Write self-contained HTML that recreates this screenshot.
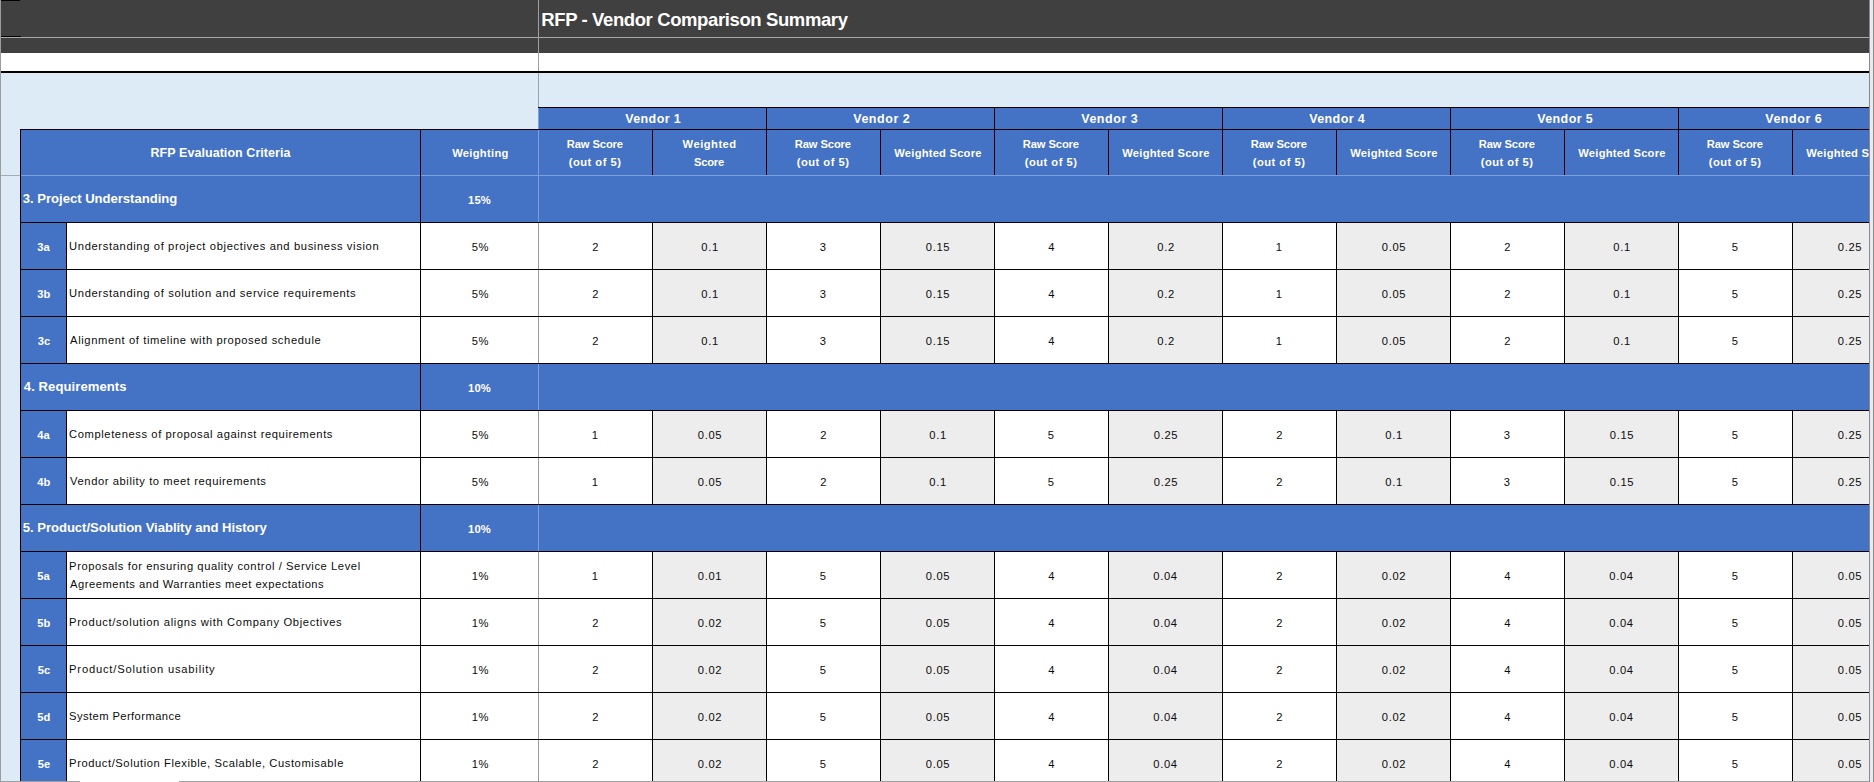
<!DOCTYPE html><html><head><meta charset="utf-8"><style>
html,body{margin:0;padding:0;width:1874px;height:782px;overflow:hidden;position:relative;background:#fff}
.r,.t{position:absolute}
.t{white-space:nowrap;line-height:1;font-family:"Liberation Sans",sans-serif}
.title{font-size:18.5px;font-weight:bold;color:#ffffff;letter-spacing:-0.3900px}
.hdr10{font-size:12.5px;font-weight:bold;color:#ffffff;letter-spacing:0.0591px}
.b9{font-size:11.2px;font-weight:bold;color:#ffffff;letter-spacing:0.2154px}
.sec{font-size:13.1px;font-weight:bold;color:#ffffff;letter-spacing:-0.0217px}
.body{font-size:11.2px;font-weight:normal;color:#0c0c0c;letter-spacing:0.6296px}
</style></head><body><div class="r" style="left:0px;top:0px;width:1874px;height:782px;background:#ffffff"></div><div class="r" style="left:0px;top:0px;width:1869px;height:53px;background:#404040"></div><div class="r" style="left:0px;top:37px;width:1869px;height:1px;background:#a8a8a8"></div><div class="r" style="left:1px;top:0px;width:19px;height:1px;background:#000"></div><div class="r" style="left:1px;top:36px;width:20px;height:1px;background:#000"></div><div class="r" style="left:0px;top:53px;width:1869px;height:18px;background:#ffffff"></div><div class="r" style="left:0px;top:71px;width:1869px;height:2px;background:#000"></div><div class="r" style="left:0px;top:73px;width:1869px;height:709px;background:#ddebf7"></div><div class="r" style="left:20px;top:129px;width:1849px;height:653px;background:#4472c4"></div><div class="r" style="left:538px;top:107px;width:1331px;height:22px;background:#4472c4"></div><div class="r" style="left:66px;top:222px;width:1803px;height:47px;background:#ffffff"></div><div class="r" style="left:652px;top:222px;width:114px;height:47px;background:#ededed"></div><div class="r" style="left:880px;top:222px;width:114px;height:47px;background:#ededed"></div><div class="r" style="left:1108px;top:222px;width:114px;height:47px;background:#ededed"></div><div class="r" style="left:1336px;top:222px;width:114px;height:47px;background:#ededed"></div><div class="r" style="left:1564px;top:222px;width:114px;height:47px;background:#ededed"></div><div class="r" style="left:1792px;top:222px;width:77px;height:47px;background:#ededed"></div><div class="r" style="left:66px;top:269px;width:1803px;height:47px;background:#ffffff"></div><div class="r" style="left:652px;top:269px;width:114px;height:47px;background:#ededed"></div><div class="r" style="left:880px;top:269px;width:114px;height:47px;background:#ededed"></div><div class="r" style="left:1108px;top:269px;width:114px;height:47px;background:#ededed"></div><div class="r" style="left:1336px;top:269px;width:114px;height:47px;background:#ededed"></div><div class="r" style="left:1564px;top:269px;width:114px;height:47px;background:#ededed"></div><div class="r" style="left:1792px;top:269px;width:77px;height:47px;background:#ededed"></div><div class="r" style="left:66px;top:316px;width:1803px;height:47px;background:#ffffff"></div><div class="r" style="left:652px;top:316px;width:114px;height:47px;background:#ededed"></div><div class="r" style="left:880px;top:316px;width:114px;height:47px;background:#ededed"></div><div class="r" style="left:1108px;top:316px;width:114px;height:47px;background:#ededed"></div><div class="r" style="left:1336px;top:316px;width:114px;height:47px;background:#ededed"></div><div class="r" style="left:1564px;top:316px;width:114px;height:47px;background:#ededed"></div><div class="r" style="left:1792px;top:316px;width:77px;height:47px;background:#ededed"></div><div class="r" style="left:66px;top:410px;width:1803px;height:47px;background:#ffffff"></div><div class="r" style="left:652px;top:410px;width:114px;height:47px;background:#ededed"></div><div class="r" style="left:880px;top:410px;width:114px;height:47px;background:#ededed"></div><div class="r" style="left:1108px;top:410px;width:114px;height:47px;background:#ededed"></div><div class="r" style="left:1336px;top:410px;width:114px;height:47px;background:#ededed"></div><div class="r" style="left:1564px;top:410px;width:114px;height:47px;background:#ededed"></div><div class="r" style="left:1792px;top:410px;width:77px;height:47px;background:#ededed"></div><div class="r" style="left:66px;top:457px;width:1803px;height:47px;background:#ffffff"></div><div class="r" style="left:652px;top:457px;width:114px;height:47px;background:#ededed"></div><div class="r" style="left:880px;top:457px;width:114px;height:47px;background:#ededed"></div><div class="r" style="left:1108px;top:457px;width:114px;height:47px;background:#ededed"></div><div class="r" style="left:1336px;top:457px;width:114px;height:47px;background:#ededed"></div><div class="r" style="left:1564px;top:457px;width:114px;height:47px;background:#ededed"></div><div class="r" style="left:1792px;top:457px;width:77px;height:47px;background:#ededed"></div><div class="r" style="left:66px;top:551px;width:1803px;height:47px;background:#ffffff"></div><div class="r" style="left:652px;top:551px;width:114px;height:47px;background:#ededed"></div><div class="r" style="left:880px;top:551px;width:114px;height:47px;background:#ededed"></div><div class="r" style="left:1108px;top:551px;width:114px;height:47px;background:#ededed"></div><div class="r" style="left:1336px;top:551px;width:114px;height:47px;background:#ededed"></div><div class="r" style="left:1564px;top:551px;width:114px;height:47px;background:#ededed"></div><div class="r" style="left:1792px;top:551px;width:77px;height:47px;background:#ededed"></div><div class="r" style="left:66px;top:598px;width:1803px;height:47px;background:#ffffff"></div><div class="r" style="left:652px;top:598px;width:114px;height:47px;background:#ededed"></div><div class="r" style="left:880px;top:598px;width:114px;height:47px;background:#ededed"></div><div class="r" style="left:1108px;top:598px;width:114px;height:47px;background:#ededed"></div><div class="r" style="left:1336px;top:598px;width:114px;height:47px;background:#ededed"></div><div class="r" style="left:1564px;top:598px;width:114px;height:47px;background:#ededed"></div><div class="r" style="left:1792px;top:598px;width:77px;height:47px;background:#ededed"></div><div class="r" style="left:66px;top:645px;width:1803px;height:47px;background:#ffffff"></div><div class="r" style="left:652px;top:645px;width:114px;height:47px;background:#ededed"></div><div class="r" style="left:880px;top:645px;width:114px;height:47px;background:#ededed"></div><div class="r" style="left:1108px;top:645px;width:114px;height:47px;background:#ededed"></div><div class="r" style="left:1336px;top:645px;width:114px;height:47px;background:#ededed"></div><div class="r" style="left:1564px;top:645px;width:114px;height:47px;background:#ededed"></div><div class="r" style="left:1792px;top:645px;width:77px;height:47px;background:#ededed"></div><div class="r" style="left:66px;top:692px;width:1803px;height:47px;background:#ffffff"></div><div class="r" style="left:652px;top:692px;width:114px;height:47px;background:#ededed"></div><div class="r" style="left:880px;top:692px;width:114px;height:47px;background:#ededed"></div><div class="r" style="left:1108px;top:692px;width:114px;height:47px;background:#ededed"></div><div class="r" style="left:1336px;top:692px;width:114px;height:47px;background:#ededed"></div><div class="r" style="left:1564px;top:692px;width:114px;height:47px;background:#ededed"></div><div class="r" style="left:1792px;top:692px;width:77px;height:47px;background:#ededed"></div><div class="r" style="left:66px;top:739px;width:1803px;height:47px;background:#ffffff"></div><div class="r" style="left:652px;top:739px;width:114px;height:47px;background:#ededed"></div><div class="r" style="left:880px;top:739px;width:114px;height:47px;background:#ededed"></div><div class="r" style="left:1108px;top:739px;width:114px;height:47px;background:#ededed"></div><div class="r" style="left:1336px;top:739px;width:114px;height:47px;background:#ededed"></div><div class="r" style="left:1564px;top:739px;width:114px;height:47px;background:#ededed"></div><div class="r" style="left:1792px;top:739px;width:77px;height:47px;background:#ededed"></div><div class="r" style="left:538px;top:0px;width:1px;height:71px;background:#a0a0a0"></div><div class="r" style="left:538px;top:73px;width:1px;height:34px;background:#94a4b4"></div><div class="r" style="left:538px;top:107px;width:1px;height:675px;background:#7f9fdc"></div><div class="r" style="left:538px;top:223px;width:1px;height:46px;background:#9a9a9a"></div><div class="r" style="left:538px;top:270px;width:1px;height:46px;background:#9a9a9a"></div><div class="r" style="left:538px;top:317px;width:1px;height:46px;background:#9a9a9a"></div><div class="r" style="left:538px;top:411px;width:1px;height:46px;background:#9a9a9a"></div><div class="r" style="left:538px;top:458px;width:1px;height:46px;background:#9a9a9a"></div><div class="r" style="left:538px;top:552px;width:1px;height:46px;background:#9a9a9a"></div><div class="r" style="left:538px;top:599px;width:1px;height:46px;background:#9a9a9a"></div><div class="r" style="left:538px;top:646px;width:1px;height:46px;background:#9a9a9a"></div><div class="r" style="left:538px;top:693px;width:1px;height:46px;background:#9a9a9a"></div><div class="r" style="left:538px;top:740px;width:1px;height:46px;background:#9a9a9a"></div><div class="r" style="left:0px;top:71px;width:1869px;height:2px;background:#000"></div><div class="r" style="left:538px;top:107px;width:1331px;height:1px;background:#000000"></div><div class="r" style="left:20px;top:129px;width:1849px;height:1px;background:#000000"></div><div class="r" style="left:0px;top:175px;width:1869px;height:1px;background:#7f9fdc"></div><div class="r" style="left:0px;top:175px;width:20px;height:1px;background:#a4acb4"></div><div class="r" style="left:20px;top:222px;width:1849px;height:1px;background:#000000"></div><div class="r" style="left:20px;top:269px;width:1849px;height:1px;background:#000000"></div><div class="r" style="left:20px;top:316px;width:1849px;height:1px;background:#000000"></div><div class="r" style="left:20px;top:363px;width:1849px;height:1px;background:#000000"></div><div class="r" style="left:20px;top:410px;width:1849px;height:1px;background:#000000"></div><div class="r" style="left:20px;top:457px;width:1849px;height:1px;background:#000000"></div><div class="r" style="left:20px;top:504px;width:1849px;height:1px;background:#000000"></div><div class="r" style="left:20px;top:551px;width:1849px;height:1px;background:#000000"></div><div class="r" style="left:20px;top:598px;width:1849px;height:1px;background:#000000"></div><div class="r" style="left:20px;top:645px;width:1849px;height:1px;background:#000000"></div><div class="r" style="left:20px;top:692px;width:1849px;height:1px;background:#000000"></div><div class="r" style="left:20px;top:739px;width:1849px;height:1px;background:#000000"></div><div class="r" style="left:20px;top:129px;width:1px;height:653px;background:#000000"></div><div class="r" style="left:420px;top:129px;width:1px;height:653px;background:#000000"></div><div class="r" style="left:652px;top:129px;width:1px;height:46px;background:#000000"></div><div class="r" style="left:766px;top:107px;width:1px;height:68px;background:#000000"></div><div class="r" style="left:880px;top:129px;width:1px;height:46px;background:#000000"></div><div class="r" style="left:994px;top:107px;width:1px;height:68px;background:#000000"></div><div class="r" style="left:1108px;top:129px;width:1px;height:46px;background:#000000"></div><div class="r" style="left:1222px;top:107px;width:1px;height:68px;background:#000000"></div><div class="r" style="left:1336px;top:129px;width:1px;height:46px;background:#000000"></div><div class="r" style="left:1450px;top:107px;width:1px;height:68px;background:#000000"></div><div class="r" style="left:1564px;top:129px;width:1px;height:46px;background:#000000"></div><div class="r" style="left:1678px;top:107px;width:1px;height:68px;background:#000000"></div><div class="r" style="left:1792px;top:129px;width:1px;height:46px;background:#000000"></div><div class="r" style="left:66px;top:222px;width:1px;height:47px;background:#000000"></div><div class="r" style="left:652px;top:222px;width:1px;height:47px;background:#000000"></div><div class="r" style="left:766px;top:222px;width:1px;height:47px;background:#000000"></div><div class="r" style="left:880px;top:222px;width:1px;height:47px;background:#000000"></div><div class="r" style="left:994px;top:222px;width:1px;height:47px;background:#000000"></div><div class="r" style="left:1108px;top:222px;width:1px;height:47px;background:#000000"></div><div class="r" style="left:1222px;top:222px;width:1px;height:47px;background:#000000"></div><div class="r" style="left:1336px;top:222px;width:1px;height:47px;background:#000000"></div><div class="r" style="left:1450px;top:222px;width:1px;height:47px;background:#000000"></div><div class="r" style="left:1564px;top:222px;width:1px;height:47px;background:#000000"></div><div class="r" style="left:1678px;top:222px;width:1px;height:47px;background:#000000"></div><div class="r" style="left:1792px;top:222px;width:1px;height:47px;background:#000000"></div><div class="r" style="left:66px;top:269px;width:1px;height:47px;background:#000000"></div><div class="r" style="left:652px;top:269px;width:1px;height:47px;background:#000000"></div><div class="r" style="left:766px;top:269px;width:1px;height:47px;background:#000000"></div><div class="r" style="left:880px;top:269px;width:1px;height:47px;background:#000000"></div><div class="r" style="left:994px;top:269px;width:1px;height:47px;background:#000000"></div><div class="r" style="left:1108px;top:269px;width:1px;height:47px;background:#000000"></div><div class="r" style="left:1222px;top:269px;width:1px;height:47px;background:#000000"></div><div class="r" style="left:1336px;top:269px;width:1px;height:47px;background:#000000"></div><div class="r" style="left:1450px;top:269px;width:1px;height:47px;background:#000000"></div><div class="r" style="left:1564px;top:269px;width:1px;height:47px;background:#000000"></div><div class="r" style="left:1678px;top:269px;width:1px;height:47px;background:#000000"></div><div class="r" style="left:1792px;top:269px;width:1px;height:47px;background:#000000"></div><div class="r" style="left:66px;top:316px;width:1px;height:47px;background:#000000"></div><div class="r" style="left:652px;top:316px;width:1px;height:47px;background:#000000"></div><div class="r" style="left:766px;top:316px;width:1px;height:47px;background:#000000"></div><div class="r" style="left:880px;top:316px;width:1px;height:47px;background:#000000"></div><div class="r" style="left:994px;top:316px;width:1px;height:47px;background:#000000"></div><div class="r" style="left:1108px;top:316px;width:1px;height:47px;background:#000000"></div><div class="r" style="left:1222px;top:316px;width:1px;height:47px;background:#000000"></div><div class="r" style="left:1336px;top:316px;width:1px;height:47px;background:#000000"></div><div class="r" style="left:1450px;top:316px;width:1px;height:47px;background:#000000"></div><div class="r" style="left:1564px;top:316px;width:1px;height:47px;background:#000000"></div><div class="r" style="left:1678px;top:316px;width:1px;height:47px;background:#000000"></div><div class="r" style="left:1792px;top:316px;width:1px;height:47px;background:#000000"></div><div class="r" style="left:66px;top:410px;width:1px;height:47px;background:#000000"></div><div class="r" style="left:652px;top:410px;width:1px;height:47px;background:#000000"></div><div class="r" style="left:766px;top:410px;width:1px;height:47px;background:#000000"></div><div class="r" style="left:880px;top:410px;width:1px;height:47px;background:#000000"></div><div class="r" style="left:994px;top:410px;width:1px;height:47px;background:#000000"></div><div class="r" style="left:1108px;top:410px;width:1px;height:47px;background:#000000"></div><div class="r" style="left:1222px;top:410px;width:1px;height:47px;background:#000000"></div><div class="r" style="left:1336px;top:410px;width:1px;height:47px;background:#000000"></div><div class="r" style="left:1450px;top:410px;width:1px;height:47px;background:#000000"></div><div class="r" style="left:1564px;top:410px;width:1px;height:47px;background:#000000"></div><div class="r" style="left:1678px;top:410px;width:1px;height:47px;background:#000000"></div><div class="r" style="left:1792px;top:410px;width:1px;height:47px;background:#000000"></div><div class="r" style="left:66px;top:457px;width:1px;height:47px;background:#000000"></div><div class="r" style="left:652px;top:457px;width:1px;height:47px;background:#000000"></div><div class="r" style="left:766px;top:457px;width:1px;height:47px;background:#000000"></div><div class="r" style="left:880px;top:457px;width:1px;height:47px;background:#000000"></div><div class="r" style="left:994px;top:457px;width:1px;height:47px;background:#000000"></div><div class="r" style="left:1108px;top:457px;width:1px;height:47px;background:#000000"></div><div class="r" style="left:1222px;top:457px;width:1px;height:47px;background:#000000"></div><div class="r" style="left:1336px;top:457px;width:1px;height:47px;background:#000000"></div><div class="r" style="left:1450px;top:457px;width:1px;height:47px;background:#000000"></div><div class="r" style="left:1564px;top:457px;width:1px;height:47px;background:#000000"></div><div class="r" style="left:1678px;top:457px;width:1px;height:47px;background:#000000"></div><div class="r" style="left:1792px;top:457px;width:1px;height:47px;background:#000000"></div><div class="r" style="left:66px;top:551px;width:1px;height:47px;background:#000000"></div><div class="r" style="left:652px;top:551px;width:1px;height:47px;background:#000000"></div><div class="r" style="left:766px;top:551px;width:1px;height:47px;background:#000000"></div><div class="r" style="left:880px;top:551px;width:1px;height:47px;background:#000000"></div><div class="r" style="left:994px;top:551px;width:1px;height:47px;background:#000000"></div><div class="r" style="left:1108px;top:551px;width:1px;height:47px;background:#000000"></div><div class="r" style="left:1222px;top:551px;width:1px;height:47px;background:#000000"></div><div class="r" style="left:1336px;top:551px;width:1px;height:47px;background:#000000"></div><div class="r" style="left:1450px;top:551px;width:1px;height:47px;background:#000000"></div><div class="r" style="left:1564px;top:551px;width:1px;height:47px;background:#000000"></div><div class="r" style="left:1678px;top:551px;width:1px;height:47px;background:#000000"></div><div class="r" style="left:1792px;top:551px;width:1px;height:47px;background:#000000"></div><div class="r" style="left:66px;top:598px;width:1px;height:47px;background:#000000"></div><div class="r" style="left:652px;top:598px;width:1px;height:47px;background:#000000"></div><div class="r" style="left:766px;top:598px;width:1px;height:47px;background:#000000"></div><div class="r" style="left:880px;top:598px;width:1px;height:47px;background:#000000"></div><div class="r" style="left:994px;top:598px;width:1px;height:47px;background:#000000"></div><div class="r" style="left:1108px;top:598px;width:1px;height:47px;background:#000000"></div><div class="r" style="left:1222px;top:598px;width:1px;height:47px;background:#000000"></div><div class="r" style="left:1336px;top:598px;width:1px;height:47px;background:#000000"></div><div class="r" style="left:1450px;top:598px;width:1px;height:47px;background:#000000"></div><div class="r" style="left:1564px;top:598px;width:1px;height:47px;background:#000000"></div><div class="r" style="left:1678px;top:598px;width:1px;height:47px;background:#000000"></div><div class="r" style="left:1792px;top:598px;width:1px;height:47px;background:#000000"></div><div class="r" style="left:66px;top:645px;width:1px;height:47px;background:#000000"></div><div class="r" style="left:652px;top:645px;width:1px;height:47px;background:#000000"></div><div class="r" style="left:766px;top:645px;width:1px;height:47px;background:#000000"></div><div class="r" style="left:880px;top:645px;width:1px;height:47px;background:#000000"></div><div class="r" style="left:994px;top:645px;width:1px;height:47px;background:#000000"></div><div class="r" style="left:1108px;top:645px;width:1px;height:47px;background:#000000"></div><div class="r" style="left:1222px;top:645px;width:1px;height:47px;background:#000000"></div><div class="r" style="left:1336px;top:645px;width:1px;height:47px;background:#000000"></div><div class="r" style="left:1450px;top:645px;width:1px;height:47px;background:#000000"></div><div class="r" style="left:1564px;top:645px;width:1px;height:47px;background:#000000"></div><div class="r" style="left:1678px;top:645px;width:1px;height:47px;background:#000000"></div><div class="r" style="left:1792px;top:645px;width:1px;height:47px;background:#000000"></div><div class="r" style="left:66px;top:692px;width:1px;height:47px;background:#000000"></div><div class="r" style="left:652px;top:692px;width:1px;height:47px;background:#000000"></div><div class="r" style="left:766px;top:692px;width:1px;height:47px;background:#000000"></div><div class="r" style="left:880px;top:692px;width:1px;height:47px;background:#000000"></div><div class="r" style="left:994px;top:692px;width:1px;height:47px;background:#000000"></div><div class="r" style="left:1108px;top:692px;width:1px;height:47px;background:#000000"></div><div class="r" style="left:1222px;top:692px;width:1px;height:47px;background:#000000"></div><div class="r" style="left:1336px;top:692px;width:1px;height:47px;background:#000000"></div><div class="r" style="left:1450px;top:692px;width:1px;height:47px;background:#000000"></div><div class="r" style="left:1564px;top:692px;width:1px;height:47px;background:#000000"></div><div class="r" style="left:1678px;top:692px;width:1px;height:47px;background:#000000"></div><div class="r" style="left:1792px;top:692px;width:1px;height:47px;background:#000000"></div><div class="r" style="left:66px;top:739px;width:1px;height:47px;background:#000000"></div><div class="r" style="left:652px;top:739px;width:1px;height:47px;background:#000000"></div><div class="r" style="left:766px;top:739px;width:1px;height:47px;background:#000000"></div><div class="r" style="left:880px;top:739px;width:1px;height:47px;background:#000000"></div><div class="r" style="left:994px;top:739px;width:1px;height:47px;background:#000000"></div><div class="r" style="left:1108px;top:739px;width:1px;height:47px;background:#000000"></div><div class="r" style="left:1222px;top:739px;width:1px;height:47px;background:#000000"></div><div class="r" style="left:1336px;top:739px;width:1px;height:47px;background:#000000"></div><div class="r" style="left:1450px;top:739px;width:1px;height:47px;background:#000000"></div><div class="r" style="left:1564px;top:739px;width:1px;height:47px;background:#000000"></div><div class="r" style="left:1678px;top:739px;width:1px;height:47px;background:#000000"></div><div class="r" style="left:1792px;top:739px;width:1px;height:47px;background:#000000"></div><div class="r" style="left:0px;top:781px;width:80px;height:1px;background:#a0a0a0"></div><div class="r" style="left:179px;top:781px;width:1690px;height:1px;background:#a0a0a0"></div><div class="r" style="left:0px;top:0px;width:1px;height:782px;background:#9c9c9c"></div><div class="t title" style="left:541.30px;top:10.64px">RFP - Vendor Comparison Summary</div><div class="t hdr10" style="left:150.50px;top:146.82px">RFP Evaluation Criteria</div><div class="t b9" style="left:452.20px;top:148.02px;letter-spacing:0.287px">Weighting</div><div class="t hdr10" style="left:625.20px;top:113.02px;letter-spacing:0.400px">Vendor 1</div><div class="t b9" style="left:566.70px;top:138.52px;letter-spacing:-0.100px">Raw Score</div><div class="t b9" style="left:568.70px;top:156.72px;letter-spacing:0.489px">(out of 5)</div><div class="t b9" style="left:682.60px;top:138.52px;letter-spacing:0.486px">Weighted</div><div class="t b9" style="left:694.10px;top:156.92px;letter-spacing:-0.250px">Score</div><div class="t hdr10" style="left:853.20px;top:113.02px;letter-spacing:0.543px">Vendor 2</div><div class="t b9" style="left:794.70px;top:138.52px;letter-spacing:-0.100px">Raw Score</div><div class="t b9" style="left:796.70px;top:156.72px;letter-spacing:0.489px">(out of 5)</div><div class="t b9" style="left:894.30px;top:148.02px">Weighted Score</div><div class="t hdr10" style="left:1081.20px;top:113.02px;letter-spacing:0.543px">Vendor 3</div><div class="t b9" style="left:1022.70px;top:138.52px;letter-spacing:-0.100px">Raw Score</div><div class="t b9" style="left:1024.70px;top:156.72px;letter-spacing:0.489px">(out of 5)</div><div class="t b9" style="left:1122.30px;top:148.02px">Weighted Score</div><div class="t hdr10" style="left:1309.20px;top:113.02px;letter-spacing:0.400px">Vendor 4</div><div class="t b9" style="left:1250.70px;top:138.52px;letter-spacing:-0.100px">Raw Score</div><div class="t b9" style="left:1252.70px;top:156.72px;letter-spacing:0.489px">(out of 5)</div><div class="t b9" style="left:1350.30px;top:148.02px">Weighted Score</div><div class="t hdr10" style="left:1537.20px;top:113.02px;letter-spacing:0.400px">Vendor 5</div><div class="t b9" style="left:1478.70px;top:138.52px;letter-spacing:-0.100px">Raw Score</div><div class="t b9" style="left:1480.70px;top:156.72px;letter-spacing:0.489px">(out of 5)</div><div class="t b9" style="left:1578.30px;top:148.02px">Weighted Score</div><div class="t hdr10" style="left:1765.20px;top:113.02px;letter-spacing:0.543px">Vendor 6</div><div class="t b9" style="left:1706.70px;top:138.52px;letter-spacing:-0.100px">Raw Score</div><div class="t b9" style="left:1708.70px;top:156.72px;letter-spacing:0.489px">(out of 5)</div><div class="t b9" style="left:1806.30px;top:148.02px">Weighted Score</div><div class="t sec" style="left:22.80px;top:192.31px;letter-spacing:-0.022px">3. Project Understanding</div><div class="t b9" style="left:468.00px;top:194.92px">15%</div><div class="t b9" style="left:37.20px;top:242.22px">3a</div><div class="t body" style="left:69.10px;top:241.02px;letter-spacing:0.630px">Understanding of project objectives and business vision</div><div class="t body" style="left:471.70px;top:242.22px">5%</div><div class="t body" style="left:592.30px;top:242.22px">2</div><div class="t body" style="left:701.30px;top:242.22px">0.1</div><div class="t body" style="left:819.80px;top:242.22px">3</div><div class="t body" style="left:925.80px;top:242.22px">0.15</div><div class="t body" style="left:1048.30px;top:242.22px">4</div><div class="t body" style="left:1157.30px;top:242.22px">0.2</div><div class="t body" style="left:1275.80px;top:242.22px">1</div><div class="t body" style="left:1381.80px;top:242.22px">0.05</div><div class="t body" style="left:1504.30px;top:242.22px">2</div><div class="t body" style="left:1613.30px;top:242.22px">0.1</div><div class="t body" style="left:1731.80px;top:242.22px">5</div><div class="t body" style="left:1837.80px;top:242.22px">0.25</div><div class="t b9" style="left:37.20px;top:289.22px">3b</div><div class="t body" style="left:69.10px;top:288.02px;letter-spacing:0.633px">Understanding of solution and service requirements</div><div class="t body" style="left:471.70px;top:289.22px">5%</div><div class="t body" style="left:592.30px;top:289.22px">2</div><div class="t body" style="left:701.30px;top:289.22px">0.1</div><div class="t body" style="left:819.80px;top:289.22px">3</div><div class="t body" style="left:925.80px;top:289.22px">0.15</div><div class="t body" style="left:1048.30px;top:289.22px">4</div><div class="t body" style="left:1157.30px;top:289.22px">0.2</div><div class="t body" style="left:1275.80px;top:289.22px">1</div><div class="t body" style="left:1381.80px;top:289.22px">0.05</div><div class="t body" style="left:1504.30px;top:289.22px">2</div><div class="t body" style="left:1613.30px;top:289.22px">0.1</div><div class="t body" style="left:1731.80px;top:289.22px">5</div><div class="t body" style="left:1837.80px;top:289.22px">0.25</div><div class="t b9" style="left:37.70px;top:336.22px">3c</div><div class="t body" style="left:70.10px;top:335.02px;letter-spacing:0.607px">Alignment of timeline with proposed schedule</div><div class="t body" style="left:471.70px;top:336.22px">5%</div><div class="t body" style="left:592.30px;top:336.22px">2</div><div class="t body" style="left:701.30px;top:336.22px">0.1</div><div class="t body" style="left:819.80px;top:336.22px">3</div><div class="t body" style="left:925.80px;top:336.22px">0.15</div><div class="t body" style="left:1048.30px;top:336.22px">4</div><div class="t body" style="left:1157.30px;top:336.22px">0.2</div><div class="t body" style="left:1275.80px;top:336.22px">1</div><div class="t body" style="left:1381.80px;top:336.22px">0.05</div><div class="t body" style="left:1504.30px;top:336.22px">2</div><div class="t body" style="left:1613.30px;top:336.22px">0.1</div><div class="t body" style="left:1731.80px;top:336.22px">5</div><div class="t body" style="left:1837.80px;top:336.22px">0.25</div><div class="t sec" style="left:23.80px;top:380.31px;letter-spacing:0.064px">4. Requirements</div><div class="t b9" style="left:468.00px;top:382.92px">10%</div><div class="t b9" style="left:37.20px;top:430.22px">4a</div><div class="t body" style="left:69.10px;top:429.02px;letter-spacing:0.586px">Completeness of proposal against requirements</div><div class="t body" style="left:471.70px;top:430.22px">5%</div><div class="t body" style="left:591.80px;top:430.22px">1</div><div class="t body" style="left:697.80px;top:430.22px">0.05</div><div class="t body" style="left:820.30px;top:430.22px">2</div><div class="t body" style="left:929.30px;top:430.22px">0.1</div><div class="t body" style="left:1047.80px;top:430.22px">5</div><div class="t body" style="left:1153.80px;top:430.22px">0.25</div><div class="t body" style="left:1276.30px;top:430.22px">2</div><div class="t body" style="left:1385.30px;top:430.22px">0.1</div><div class="t body" style="left:1503.80px;top:430.22px">3</div><div class="t body" style="left:1609.80px;top:430.22px">0.15</div><div class="t body" style="left:1731.80px;top:430.22px">5</div><div class="t body" style="left:1837.80px;top:430.22px">0.25</div><div class="t b9" style="left:37.20px;top:477.22px">4b</div><div class="t body" style="left:70.10px;top:476.02px;letter-spacing:0.585px">Vendor ability to meet requirements</div><div class="t body" style="left:471.70px;top:477.22px">5%</div><div class="t body" style="left:591.80px;top:477.22px">1</div><div class="t body" style="left:697.80px;top:477.22px">0.05</div><div class="t body" style="left:820.30px;top:477.22px">2</div><div class="t body" style="left:929.30px;top:477.22px">0.1</div><div class="t body" style="left:1047.80px;top:477.22px">5</div><div class="t body" style="left:1153.80px;top:477.22px">0.25</div><div class="t body" style="left:1276.30px;top:477.22px">2</div><div class="t body" style="left:1385.30px;top:477.22px">0.1</div><div class="t body" style="left:1503.80px;top:477.22px">3</div><div class="t body" style="left:1609.80px;top:477.22px">0.15</div><div class="t body" style="left:1731.80px;top:477.22px">5</div><div class="t body" style="left:1837.80px;top:477.22px">0.25</div><div class="t sec" style="left:22.80px;top:521.31px;letter-spacing:-0.041px">5. Product/Solution Viablity and History</div><div class="t b9" style="left:468.00px;top:523.92px">10%</div><div class="t b9" style="left:37.20px;top:571.22px">5a</div><div class="t body" style="left:69.10px;top:561.12px;letter-spacing:0.575px">Proposals for ensuring quality control / Service Level</div><div class="t body" style="left:70.10px;top:578.72px;letter-spacing:0.495px">Agreements and Warranties meet expectations</div><div class="t body" style="left:471.70px;top:571.22px">1%</div><div class="t body" style="left:591.80px;top:571.22px">1</div><div class="t body" style="left:697.80px;top:571.22px">0.01</div><div class="t body" style="left:819.80px;top:571.22px">5</div><div class="t body" style="left:925.80px;top:571.22px">0.05</div><div class="t body" style="left:1048.30px;top:571.22px">4</div><div class="t body" style="left:1153.30px;top:571.22px">0.04</div><div class="t body" style="left:1276.30px;top:571.22px">2</div><div class="t body" style="left:1381.80px;top:571.22px">0.02</div><div class="t body" style="left:1504.30px;top:571.22px">4</div><div class="t body" style="left:1609.30px;top:571.22px">0.04</div><div class="t body" style="left:1731.80px;top:571.22px">5</div><div class="t body" style="left:1837.80px;top:571.22px">0.05</div><div class="t b9" style="left:37.20px;top:618.22px">5b</div><div class="t body" style="left:69.10px;top:617.02px;letter-spacing:0.667px">Product/solution aligns with Company Objectives</div><div class="t body" style="left:471.70px;top:618.22px">1%</div><div class="t body" style="left:592.30px;top:618.22px">2</div><div class="t body" style="left:697.80px;top:618.22px">0.02</div><div class="t body" style="left:819.80px;top:618.22px">5</div><div class="t body" style="left:925.80px;top:618.22px">0.05</div><div class="t body" style="left:1048.30px;top:618.22px">4</div><div class="t body" style="left:1153.30px;top:618.22px">0.04</div><div class="t body" style="left:1276.30px;top:618.22px">2</div><div class="t body" style="left:1381.80px;top:618.22px">0.02</div><div class="t body" style="left:1504.30px;top:618.22px">4</div><div class="t body" style="left:1609.30px;top:618.22px">0.04</div><div class="t body" style="left:1731.80px;top:618.22px">5</div><div class="t body" style="left:1837.80px;top:618.22px">0.05</div><div class="t b9" style="left:37.70px;top:665.22px">5c</div><div class="t body" style="left:69.10px;top:664.02px;letter-spacing:0.800px">Product/Solution usability</div><div class="t body" style="left:471.70px;top:665.22px">1%</div><div class="t body" style="left:592.30px;top:665.22px">2</div><div class="t body" style="left:697.80px;top:665.22px">0.02</div><div class="t body" style="left:819.80px;top:665.22px">5</div><div class="t body" style="left:925.80px;top:665.22px">0.05</div><div class="t body" style="left:1048.30px;top:665.22px">4</div><div class="t body" style="left:1153.30px;top:665.22px">0.04</div><div class="t body" style="left:1276.30px;top:665.22px">2</div><div class="t body" style="left:1381.80px;top:665.22px">0.02</div><div class="t body" style="left:1504.30px;top:665.22px">4</div><div class="t body" style="left:1609.30px;top:665.22px">0.04</div><div class="t body" style="left:1731.80px;top:665.22px">5</div><div class="t body" style="left:1837.80px;top:665.22px">0.05</div><div class="t b9" style="left:37.20px;top:712.22px">5d</div><div class="t body" style="left:69.10px;top:711.02px;letter-spacing:0.418px">System Performance</div><div class="t body" style="left:471.70px;top:712.22px">1%</div><div class="t body" style="left:592.30px;top:712.22px">2</div><div class="t body" style="left:697.80px;top:712.22px">0.02</div><div class="t body" style="left:819.80px;top:712.22px">5</div><div class="t body" style="left:925.80px;top:712.22px">0.05</div><div class="t body" style="left:1048.30px;top:712.22px">4</div><div class="t body" style="left:1153.30px;top:712.22px">0.04</div><div class="t body" style="left:1276.30px;top:712.22px">2</div><div class="t body" style="left:1381.80px;top:712.22px">0.02</div><div class="t body" style="left:1504.30px;top:712.22px">4</div><div class="t body" style="left:1609.30px;top:712.22px">0.04</div><div class="t body" style="left:1731.80px;top:712.22px">5</div><div class="t body" style="left:1837.80px;top:712.22px">0.05</div><div class="t b9" style="left:37.70px;top:759.22px">5e</div><div class="t body" style="left:69.10px;top:758.02px;letter-spacing:0.571px">Product/Solution Flexible, Scalable, Customisable</div><div class="t body" style="left:471.70px;top:759.22px">1%</div><div class="t body" style="left:592.30px;top:759.22px">2</div><div class="t body" style="left:697.80px;top:759.22px">0.02</div><div class="t body" style="left:819.80px;top:759.22px">5</div><div class="t body" style="left:925.80px;top:759.22px">0.05</div><div class="t body" style="left:1048.30px;top:759.22px">4</div><div class="t body" style="left:1153.30px;top:759.22px">0.04</div><div class="t body" style="left:1276.30px;top:759.22px">2</div><div class="t body" style="left:1381.80px;top:759.22px">0.02</div><div class="t body" style="left:1504.30px;top:759.22px">4</div><div class="t body" style="left:1609.30px;top:759.22px">0.04</div><div class="t body" style="left:1731.80px;top:759.22px">5</div><div class="t body" style="left:1837.80px;top:759.22px">0.05</div><div class="r" style="left:1869px;top:0px;width:1px;height:782px;background:#858a96"></div><div class="r" style="left:1870px;top:0px;width:3px;height:782px;background:#e8eaee"></div><div class="r" style="left:1873px;top:0px;width:1px;height:782px;background:#8c8c8c"></div></body></html>
